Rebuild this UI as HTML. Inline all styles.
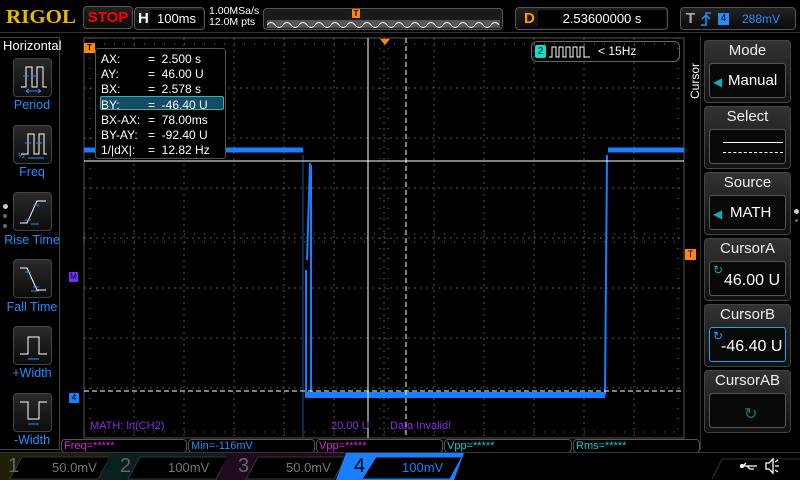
<!DOCTYPE html>
<html><head><meta charset="utf-8"><style>
*{margin:0;padding:0;box-sizing:border-box}
body{width:800px;height:480px;background:#000;position:relative;overflow:hidden;font-family:"Liberation Sans",sans-serif;color:#fff}
.a{position:absolute}
.box{position:absolute;border:1px solid #555;border-radius:4px;background:linear-gradient(#222,#0a0a0a)}
.lbtn{position:absolute;left:13px;width:39px;height:39px;border:1px solid #444;border-radius:4px;background:linear-gradient(#2a2a2a,#0c0c0c)}
.llab{position:absolute;left:0;width:64px;text-align:center;color:#1f8fff;font-size:12.5px}
.menu{position:absolute;left:704px;width:87px;height:63px;border:1px solid #444;border-radius:4px;background:linear-gradient(#333,#111)}
.menu .t{text-align:center;font-size:15px;line-height:20px;color:#eee}
.menu .in{position:absolute;left:4px;right:4px;top:22px;bottom:4px;border:1px solid #555;border-radius:3px;background:#080808}
.ml{position:absolute;top:439px;height:14px;border:1px solid #555;border-radius:4px;font-size:11px;line-height:12px;padding-left:2px}
.ch{position:absolute;top:455px;height:25px;font-size:20px;color:#666}
</style></head><body>
<div class="a" style="left:6px;top:6px;font-family:'Liberation Serif',serif;font-weight:bold;font-size:20px;color:#e8b800;transform:scaleX(1.05);transform-origin:left">RIGOL</div>
<div class="box" style="left:83px;top:6px;width:50px;height:23px;color:#f00;font-weight:bold;font-size:15px;text-align:center;line-height:21px">STOP</div>
<div class="box" style="left:134px;top:7px;width:71px;height:23px"><span class="a" style="left:3px;top:2px;font-weight:bold;font-size:15px">H</span><div class="a" style="left:15px;top:2px;width:53px;height:17px;background:#000;font-size:13px;line-height:17px;text-align:center">100ms</div></div>
<div class="a" style="left:209px;top:6px;font-size:10.5px;line-height:11px">1.00MSa/s<br>12.0M pts</div>
<div class="box" style="left:263px;top:8px;width:240px;height:22px;background:#1a1a1a">
<div class="a" style="left:3px;top:11px;width:233px;height:8px;background:#555"></div>
<svg class="a" style="left:3px;top:10px" width="233" height="10"><path d="M0 6 q4-5 8 0 t8 0 t8 0 t8 0 t8 0 t8 0 t8 0 t8 0 t8 0 t8 0 t8 0 t8 0 t8 0 t8 0 t8 0 t8 0 t8 0 t8 0 t8 0 t8 0 t8 0 t8 0 t8 0 t8 0 t8 0 t8 0 t8 0 t8 0 t8 0" stroke="#fff" fill="none"/></svg>
<div class="a" style="left:88px;top:0;width:8px;height:9px;background:#f80;font-size:8px;color:#000;text-align:center;line-height:9px;font-weight:bold">T</div>
</div>
<div class="box" style="left:515px;top:7px;width:153px;height:23px"><span class="a" style="left:8px;top:2px;color:#f90;font-weight:bold;font-size:15px">D</span><div class="a" style="left:22px;top:2px;width:128px;height:17px;background:#000;font-size:13px;line-height:17px;text-align:center">2.53600000 s</div></div>
<div class="box" style="left:680px;top:7px;width:116px;height:23px"><span class="a" style="left:5px;top:2px;color:#aaa;font-weight:bold;font-size:15px">T</span>
<svg class="a" style="left:18px;top:3px" width="14" height="16"><path d="M2 14h5V2h5M3 8l4-4 4 4" stroke="#1f8fff" fill="none" stroke-width="1.5"/></svg>
<div class="a" style="left:37px;top:5px;width:11px;height:12px;background:#1f8fff;color:#000;font-size:10px;text-align:center;line-height:12px">4</div><span class="a" style="left:61px;top:4px;color:#1f8fff;font-size:12px">288mV</span></div>
<div class="a" style="left:0;top:32px;width:800px;height:1px;background:#333"></div>
<div class="a" style="left:0;top:37px;width:60px;height:413px;border:1px solid #444;border-left:none"></div>
<div class="a" style="left:3px;top:38px;font-size:13px">Horizontal</div>
<div class="lbtn" style="top:58px"><svg width="39" height="39"><path d="M7 28h5V8h6v20h5V8h6v20h4" stroke="#fff" fill="none"/><path d="M9 17h6M17 17h6" stroke="#1f8fff"/><path d="M12 32h15M12 32l3-2M12 32l3 2M27 32l-3-2M27 32l-3 2" stroke="#1f8fff"/></svg></div>
<div class="llab" style="top:98px">Period</div>
<div class="lbtn" style="top:125px"><svg width="39" height="39"><path d="M7 28h7V8h6v20h5V8h5v20h3" stroke="#fff" fill="none"/><path d="M11 17h6M22 17h6" stroke="#1f8fff"/><path d="M14 32h16" stroke="#1f8fff"/><text x="4" y="32" fill="#1f8fff" font-size="8">½</text></svg></div>
<div class="llab" style="top:165px">Freq</div>
<div class="lbtn" style="top:192px"><svg width="39" height="39"><path d="M6 30h7l10-22h9" stroke="#fff" fill="none"/><path d="M19 12h6M11 27h6M17 31h8" stroke="#1f8fff"/></svg></div>
<div class="llab" style="top:233px">Rise Time</div>
<div class="lbtn" style="top:259px"><svg width="39" height="39"><path d="M6 8h7l10 22h9" stroke="#fff" fill="none"/><path d="M11 12h6M19 27h6M17 31h8" stroke="#1f8fff"/></svg></div>
<div class="llab" style="top:300px">Fall Time</div>
<div class="lbtn" style="top:326px"><svg width="39" height="39"><path d="M6 27h8V10h11v17h8" stroke="#fff" fill="none"/><path d="M14 32h11" stroke="#1f8fff"/></svg></div>
<div class="llab" style="top:366px">+Width</div>
<div class="lbtn" style="top:393px"><svg width="39" height="39"><path d="M6 8h8v17h11V8h8" stroke="#fff" fill="none"/><path d="M14 30h11" stroke="#1f8fff"/></svg></div>
<div class="llab" style="top:433px">-Width</div>
<div class="a" style="left:3px;top:204px;width:5px;height:5px;border-radius:50%;background:#ccc"></div>
<div class="a" style="left:3px;top:214px;width:4px;height:4px;border-radius:50%;background:#666"></div>
<div class="a" style="left:3px;top:224px;width:4px;height:4px;border-radius:50%;background:#666"></div>
<svg class="a" style="left:0;top:0" width="800" height="480">
<rect x="84" y="38" width="600" height="400" fill="none" stroke="#555"/>
<g stroke="#555" stroke-dasharray="2 4">
<path d="M134 38v400M184 38v400M234 38v400M284 38v400M334 38v400M384 38v400M434 38v400M484 38v400M534 38v400M584 38v400M634 38v400"/>
<path d="M84 88h600M84 138h600M84 188h600M84 238h600M84 288h600M84 338h600M84 388h600"/>
</g>
<path d="M84 236v5" stroke="#777"/>
<g stroke="#777" stroke-dasharray="1 9">
<path d="M84 234h600M84 242h600"/>
<path d="M380 38v400M388 38v400"/>
<path d="M84 38h600" />
<path d="M84 44h600M84 432h600"/>
<path d="M90 38v400M678 38v400"/>
</g>
<path d="M84 150h219M608 150h76" stroke="#1a7fff" stroke-width="5"/>
<path d="M305 395h300" stroke="#1a7fff" stroke-width="6"/>
<path d="M303 155v283" stroke="#1a4f99" stroke-width="1"/>
<path d="M306 395V270M307 260L310 163M311 165v230" stroke="#1a7fff" stroke-width="2"/>
<path d="M605 395l2-240" stroke="#1a7fff" stroke-width="2"/>
<path d="M84 161h600" stroke="#fff"/>
<path d="M84 391h600" stroke="#fff" stroke-dasharray="5 3"/>
<path d="M368 38v400" stroke="#fff"/>
<path d="M406 38v400" stroke="#fff" stroke-dasharray="5 3"/>
<path d="M380 39h10l-5 6z" fill="#f80"/>
</svg>
<div class="a" style="left:84px;top:43px;width:11px;height:10px;background:#f80;color:#000;font-size:8px;text-align:center;line-height:10px;font-weight:bold">T</div>
<div class="a" style="left:69px;top:272px;width:9px;height:10px;background:#7a2fff;color:#000;font-size:8px;text-align:center;line-height:10px">M</div>
<div class="a" style="left:69px;top:393px;width:10px;height:10px;background:#1a7fff;color:#000;font-size:8px;text-align:center;line-height:10px">4</div>
<div class="a" style="left:685px;top:249px;width:11px;height:11px;background:#f80;color:#000;font-size:9px;text-align:center;line-height:11px">T</div>
<div class="a" style="left:95px;top:48px;width:131px;height:111px;border:1px solid #555;border-radius:3px;background:#000;font-size:12px;line-height:15.2px">
<div style="position:absolute;left:4px;top:47px;width:124px;height:14px;background:#164b66;border:1px solid #4aa;border-radius:2px"></div>
<div class="a" style="left:5px;top:3px;white-space:pre">AX:
AY:
BX:
BY:
BX-AX:
BY-AY:
1/|dX|:</div>
<div class="a" style="left:52px;top:3px;white-space:pre">=  2.500 s
=  46.00 U
=  2.578 s
=  -46.40 U
=  78.00ms
=  -92.40 U
=  12.82 Hz</div>
</div>
<div class="a" style="left:531px;top:41px;width:149px;height:21px;border:1px solid #666;border-radius:6px;font-size:12px;line-height:19px">
<span class="a" style="left:3px;top:3px;width:11px;height:13px;background:#1dc;color:#000;font-size:10px;text-align:center;line-height:13px;border-radius:2px">2</span>
<svg class="a" style="left:17px;top:3px" width="46" height="14"><path d="M0 12h3V2h4v10h3V2h4v10h3V2h4v10h3V2h4v10h3V2h4v10h6" stroke="#fff" fill="none"/></svg>
<span class="a" style="left:66px;top:0">&lt; 15Hz</span></div>
<div class="a" style="left:90px;top:420px;color:#8a2be2;font-size:11px">MATH: ln(CH2)</div>
<div class="a" style="left:331px;top:420px;color:#8a2be2;font-size:11px">20.00 U</div>
<div class="a" style="left:390px;top:420px;color:#8a2be2;font-size:11px">Data Invalid!</div>
<div class="a" style="font-size:12px;top:99px;left:688px;transform:rotate(-90deg);transform-origin:left top">Cursor</div>
<div class="a" style="left:700px;top:37px;width:1px;height:413px;background:#333"></div>
<div class="menu" style="top:40px"><div class="t">Mode</div><div class="in"><span class="a" style="left:3px;top:11px;color:#1ab;font-size:12px">◀</span><span class="a" style="left:18px;top:8px;font-size:15px">Manual</span></div></div>
<div class="menu" style="top:106px"><div class="t">Select</div><div class="in"><div class="a" style="left:13px;top:12px;width:60px;height:1px;background:#fff"></div><div class="a" style="left:13px;top:22px;width:60px;border-top:1px dashed #fff"></div></div></div>
<div class="menu" style="top:172px"><div class="t">Source</div><div class="in"><span class="a" style="left:3px;top:11px;color:#1ab;font-size:12px">◀</span><span class="a" style="left:20px;top:8px;font-size:15px">MATH</span></div></div>
<div class="a" style="left:794px;top:209px;width:5px;height:5px;border-radius:50%;background:#ccc"></div>
<div class="a" style="left:795px;top:219px;width:3px;height:3px;border-radius:50%;background:#666"></div>
<div class="menu" style="top:238px"><div class="t">CursorA</div><div class="in"><span class="a" style="left:3px;top:1px;color:#1ab;font-size:12px">↻</span><span class="a" style="left:14px;top:10px;font-size:16px">46.00 U</span></div></div>
<div class="menu" style="top:304px"><div class="t">CursorB</div><div class="in" style="border-color:#1ae"><span class="a" style="left:3px;top:1px;color:#1ae;font-size:12px">↻</span><span class="a" style="left:11px;top:10px;font-size:16px">-46.40 U</span></div></div>
<div class="menu" style="top:370px"><div class="t">CursorAB</div><div class="in"><span class="a" style="left:34px;top:10px;color:#177;font-size:16px">↻</span></div></div>
<div class="ml" style="left:61px;width:126px;color:#e020e0">Freq=*****</div>
<div class="ml" style="left:188px;width:127px;color:#1f8fff">Min=-116mV</div>
<div class="ml" style="left:316px;width:127px;color:#e020e0">Vpp=*****</div>
<div class="ml" style="left:444px;width:128px;color:#1cc">Vpp=*****</div>
<div class="ml" style="left:573px;width:127px;color:#1cc">Rms=*****</div>
<div class="a" style="left:0;top:452px;width:800px;height:1px;background:#333"></div>
<svg class="a" style="left:0;top:453px" width="800" height="27">
<path d="M0 0h110l-10 27H0z" fill="#1f1f0a"/><path d="M22 4h88l-12 22H10z" fill="#000" stroke="#333"/>
<path d="M110 0h118l-10 27H100z" fill="#0a1f1f"/><path d="M140 4h88l-12 22h-88z" fill="#000" stroke="#333"/>
<path d="M228 0h118l-10 27H218z" fill="#1f0a1f"/><path d="M258 4h88l-12 22h-88z" fill="#000" stroke="#333"/>
<path d="M346 0h118l-10 27H336z" fill="#1a7fff"/><path d="M376 4h86l-12 22h-88z" fill="#000" stroke="#1a7fff"/>
<path d="M712 26l10-20h78" stroke="#333" fill="none"/>
<g stroke="#fff" fill="none" stroke-width="1.3">
<path d="M342 0"/>
<path d="M743 13h14M743 13l3-3M747 13l3 3h4"/><circle cx="742" cy="13" r="1.5" fill="#fff"/>
<path d="M766 10h3l4-4v14l-4-4h-3z"/><path d="M775 9l3-2M775 13h4M775 17l3 2"/>
</g>
</svg>
<div class="ch" style="left:8px">1</div><div class="a" style="left:52px;top:460px;color:#777;font-size:13px">50.0mV</div>
<div class="ch" style="left:120px">2</div><div class="a" style="left:168px;top:460px;color:#777;font-size:13px">100mV</div>
<div class="ch" style="left:238px">3</div><div class="a" style="left:286px;top:460px;color:#777;font-size:13px">50.0mV</div>
<div class="ch" style="left:354px;color:#000">4</div><div class="a" style="left:402px;top:460px;color:#1a7fff;font-size:13px">100mV</div>
</body></html>
